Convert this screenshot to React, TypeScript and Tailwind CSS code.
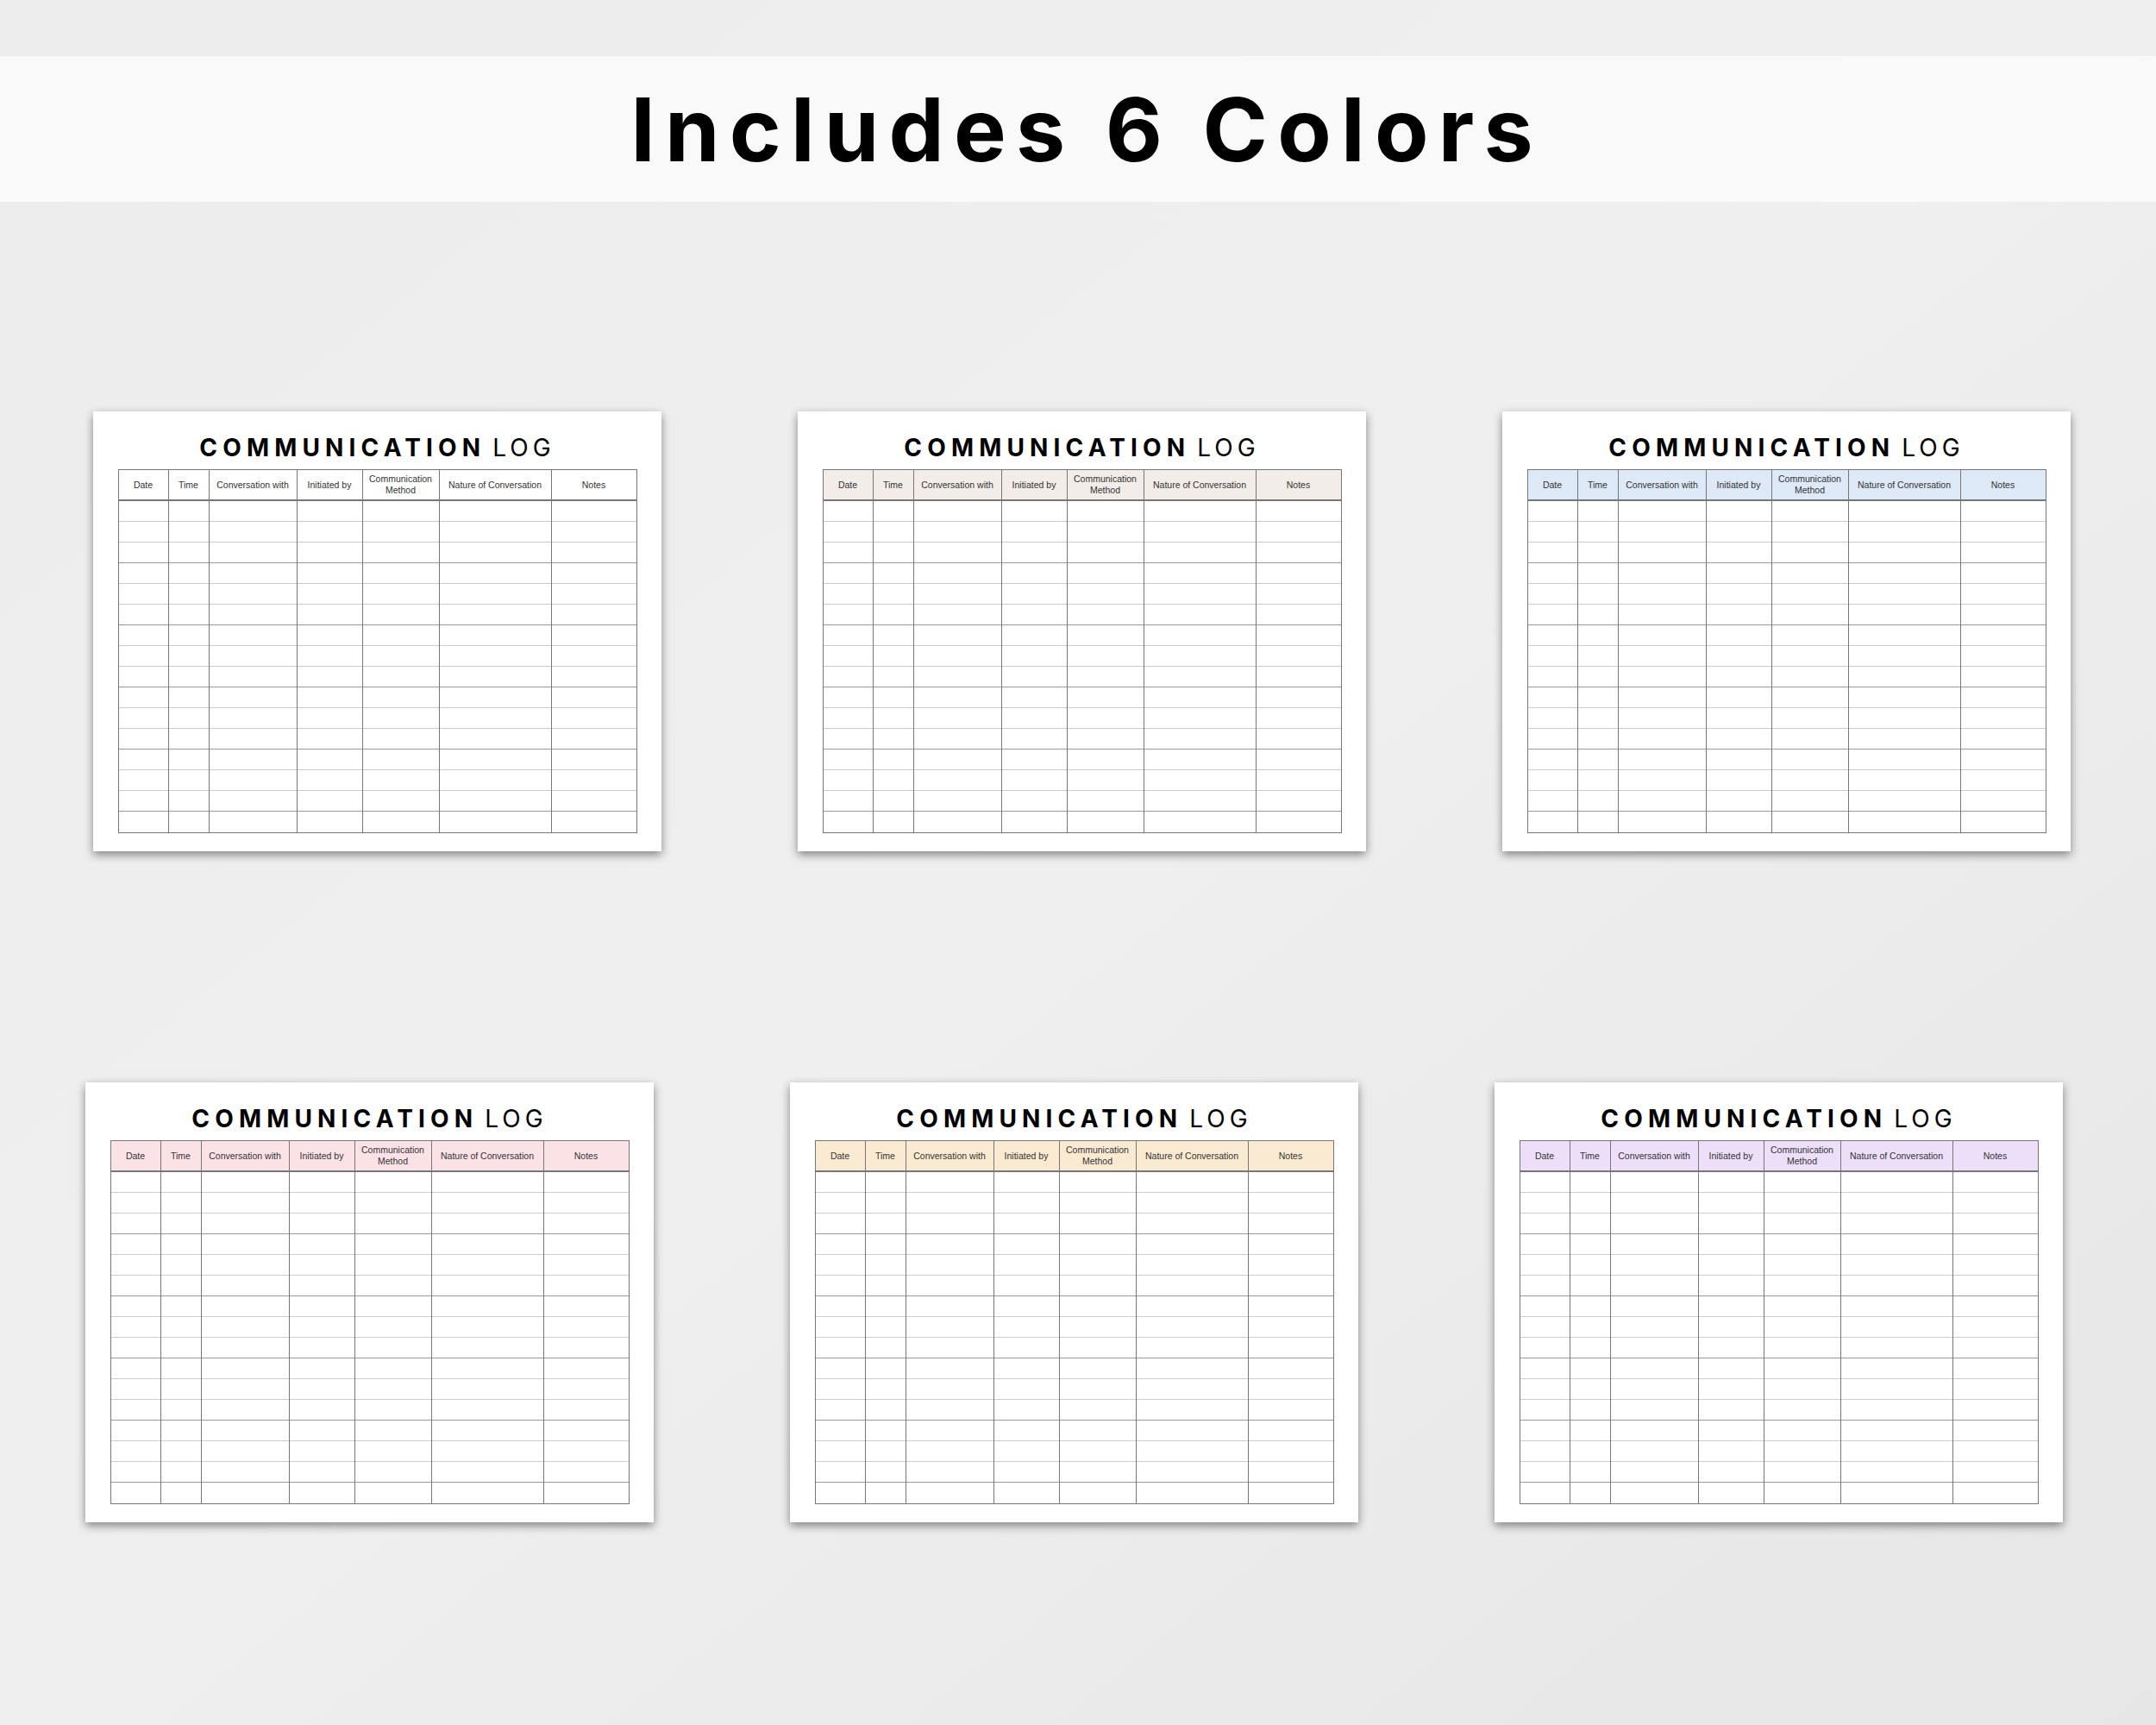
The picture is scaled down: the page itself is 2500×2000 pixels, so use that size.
import React from "react";

const cols = [
  { w: 57, label: "Date" },
  { w: 47, label: "Time" },
  { w: 102, label: "Conversation with" },
  { w: 76, label: "Initiated by" },
  { w: 89, label: "Communication Method" },
  { w: 130, label: "Nature of Conversation" },
  { w: 99, label: "Notes" },
];

function Card({ color }: { color: string }) {
  return (
    <div className="w-[659px] h-[510px] bg-white flex flex-col items-center shadow-[0_4px_10px_rgba(0,0,0,0.45)]">
      <div className="mt-[28px] h-[39px] text-[28px] leading-none text-black" style={{ fontFamily: "Inter, 'Liberation Sans', sans-serif" }}>
        <span className="font-bold tracking-[0.22em]">COMMUNICATION</span>{" "}
        <span className="font-normal tracking-[0.18em]">LOG</span>
      </div>
      <div className="border border-[#777] flex" style={{ fontFamily: "'Liberation Sans', Arial, sans-serif" }}>
        {cols.map((c, i) => (
          <div key={i} className={`flex flex-col ${i > 0 ? "border-l border-[#777]" : ""}`} style={{ width: c.w }}>
            <div
              className="h-[36px] flex items-center justify-center text-center text-[10.5px] leading-[13px] text-[#333] border-b-2 border-[#777] px-0.5"
              style={{ background: color }}
            >
              {c.label === "Communication Method" ? (
                <span>Communication<br />Method</span>
              ) : (
                c.label
              )}
            </div>
            {Array.from({ length: 16 }).map((_, r) => (
              <div key={r} className={`h-[24px] ${r < 15 ? (r % 3 === 2 ? "border-b border-[#999]" : "border-b border-[#ccc]") : ""}`} />
            ))}
          </div>
        ))}
      </div>
    </div>
  );
}

export default function App() {
  return (
    <div className="w-[2500px] h-[2000px] bg-gradient-to-br from-[#ededed] via-[#efefef] to-[#e6e6e6] relative overflow-hidden">
      <div className="h-[65px]" />
      <div className="h-[169px] bg-[#f9f9f9] flex items-center justify-center">
        <span className="text-[102px] font-bold text-black tracking-[0.11em] leading-none pl-[20px]" style={{ fontFamily: "Inter, 'Liberation Sans', sans-serif" }}>
          Includes 6 Colors
        </span>
      </div>
      <div className="flex gap-[158px] pl-[108px] mt-[243px]">
        <Card color="#ffffff" />
        <Card color="#f2ede9" />
        <Card color="#dde9f6" />
      </div>
      <div className="flex gap-[158px] pl-[99px] mt-[268px]">
        <Card color="#fbe2e7" />
        <Card color="#fbead2" />
        <Card color="#eddffa" />
      </div>
    </div>
  );
}
